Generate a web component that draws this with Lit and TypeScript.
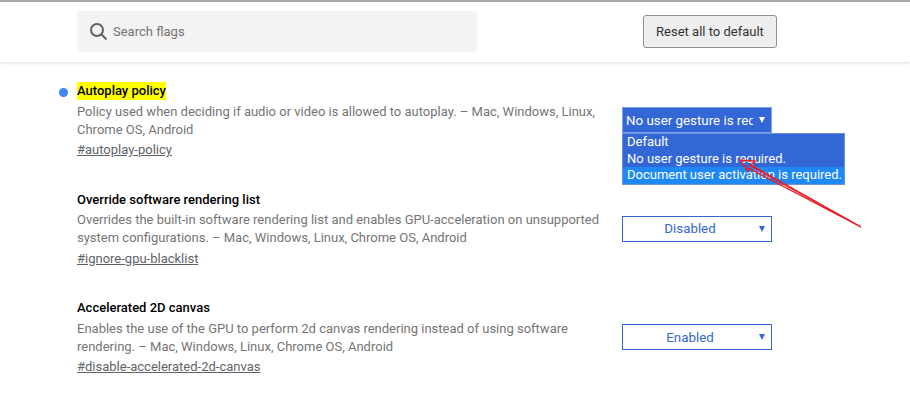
import { LitElement, html, css, svg } from "lit";
import { customElement } from "lit/decorators.js";

@customElement("flag-select")
class FlagSelect extends LitElement {
  static properties = { label: {}, open: { type: Boolean } };
  label = "";
  open = false;
  static styles = css`
    :host { display: block; position: relative; width: 150px; }
    .box { box-sizing: border-box; width: 150px; height: 26px; border: 1px solid #3367d6; color: #3367d6; background: #fff;
      display: flex; align-items: center; font-size: 13.33px; padding: 0 6px 0 4px; }
    .text { flex: 1; min-width: 0; text-align: center; margin-right: 6px; }
    .arrow { flex: none; width: 0; height: 0; border-left: 3px solid transparent; border-right: 3px solid transparent; border-top: 6px solid currentColor; }
    .box.open { background: #3367d6; color: #fff; border-color: #7ba4ea; padding-left: 3px; }
    .box.open .text { text-align: left; overflow: hidden; white-space: nowrap; }
    .list { position: absolute; left: 0; top: 26px; width: 223px; box-sizing: border-box; background: #3367d6; color: #fff;
      border: 1px solid #6e8fdc; font-size: 13px; line-height: 16.67px; z-index: 2; }
    .opt { padding-left: 4px; white-space: nowrap; }
    .opt.sel { background: #1e88f5; }
  `;
  render() {
    return html`
      <div class="box ${this.open ? "open" : ""}"><span class="text">${this.label}</span><span class="arrow"></span></div>
      ${this.open
        ? html`<div class="list">
            <div class="opt">Default</div>
            <div class="opt">No user gesture is required.</div>
            <div class="opt sel">Document user activation is required.</div>
          </div>`
        : ""}
    `;
  }
}

@customElement("app-root")
class AppRoot extends LitElement {
  static styles = css`
    :host { display: block; position: relative; width: 910px; height: 402px; overflow: hidden; background: #fff;
      font-family: Roboto, "Liberation Sans", sans-serif; font-size: 13px; }
    .top { height: 2px; background: #a9a9a9; }
    header { box-sizing: border-box; height: 60px; display: flex; align-items: flex-start; padding: 9px 133px 0 77px;
      justify-content: space-between; box-shadow: 0 1px 3px rgba(0,0,0,.14); }
    .search { box-sizing: border-box; width: 400px; height: 41px; background: #f3f3f3; border-radius: 3px; display: flex; align-items: center;
      padding-left: 13px; gap: 6px; color: #757575; font-size: 13px; }
    .search svg { display: block; }
    button { font: inherit; box-sizing: border-box; width: 134px; height: 33px; margin-top: 4px; background: #eee; border: 1px solid #8f8f8f;
      border-radius: 3px; color: #333; padding: 0; }
    main { padding: 20px 0 0 77px; }
    .row { display: flex; height: 108.5px; }
    .info { width: 545px; position: relative; }
    .dot { position: absolute; left: -18px; top: 6px; width: 9px; height: 9px; border-radius: 50%; background: #4285f4; }
    h2 { margin: 0; font: 500 13px/18px Roboto, sans-serif; color: #000; display: table; }
    h2.hl { background: #ff0; }
    p { margin: 2.9px 0 0; color: #757575; line-height: 18px; width: 530px; }
    a { display: inline-block; margin-top: 2.2px; color: #5f6368; line-height: 18px; text-decoration: underline; }
    flag-select { margin-top: 25px; }
    .mark { position: absolute; left: 0; top: 0; pointer-events: none; z-index: 5; }
  `;
  render() {
    return html`
      <div class="top"></div>
      <header>
        <div class="search">
          <svg width="17" height="17" viewBox="0 0 17 17" fill="none" stroke="#5f6368" stroke-width="2">
            <circle cx="7" cy="7" r="6"></circle><path d="M11 11 L16.5 16.5"></path>
          </svg>
          <span>Search flags</span>
        </div>
        <button>Reset all to default</button>
      </header>
      <main>
        <div class="row">
          <div class="info">
            <span class="dot"></span>
            <h2 class="hl">Autoplay policy</h2>
            <p>Policy used when deciding if audio or video is allowed to autoplay. – Mac, Windows, Linux, Chrome OS, Android</p>
            <a>#autoplay-policy</a>
          </div>
          <flag-select label="No user gesture is required." open></flag-select>
        </div>
        <div class="row">
          <div class="info">
            <h2>Override software rendering list</h2>
            <p>Overrides the built-in software rendering list and enables GPU-acceleration on unsupported system configurations. – Mac, Windows, Linux, Chrome OS, Android</p>
            <a>#ignore-gpu-blacklist</a>
          </div>
          <flag-select label="Disabled"></flag-select>
        </div>
        <div class="row">
          <div class="info">
            <h2>Accelerated 2D canvas</h2>
            <p>Enables the use of the GPU to perform 2d canvas rendering instead of using software rendering. – Mac, Windows, Linux, Chrome OS, Android</p>
            <a>#disable-accelerated-2d-canvas</a>
          </div>
          <flag-select label="Enabled"></flag-select>
        </div>
      </main>
      <svg class="mark" width="910" height="402" viewBox="0 0 910 402" fill="none" stroke="#ee1c25" stroke-width="1.4">
        ${svg`<path d="M740 160 L755 161 L751 165 L861 227 L748 168 L748 171 Z"></path>
        <path d="M749 165 L861 227"></path>`}
      </svg>
    `;
  }
}
